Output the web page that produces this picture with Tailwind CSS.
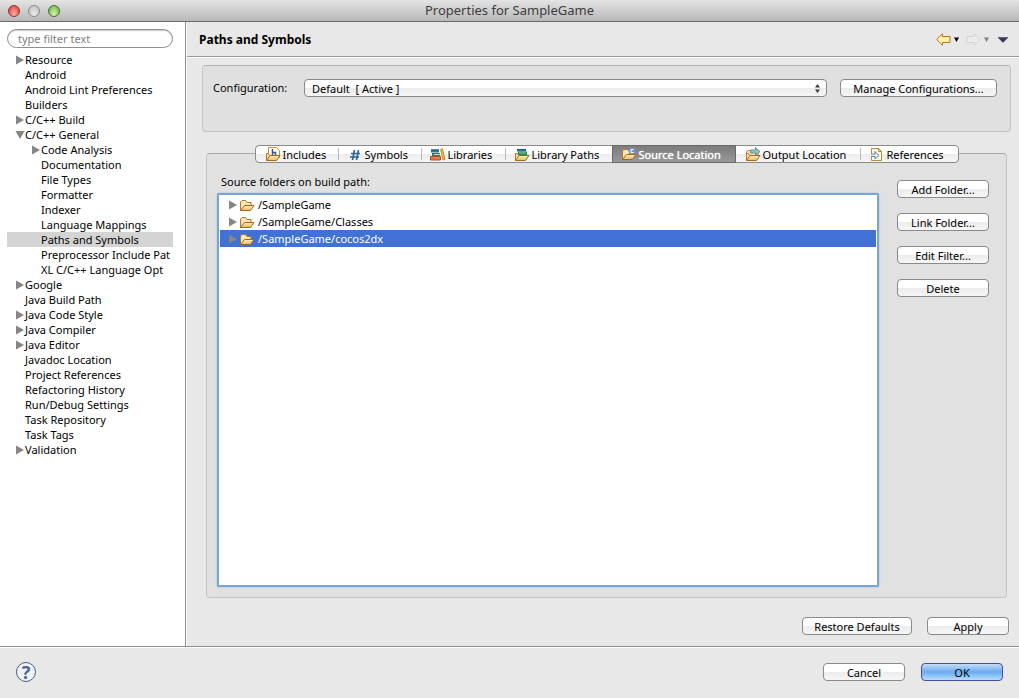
<!DOCTYPE html>
<html lang="en">
<head>
    <meta charset="UTF-8">
    <title>Properties for SampleGame</title>
    <script src="https://cdn.jsdelivr.net/npm/@tailwindcss/browser@4"></script>
</head>
<body class="h-screen flex flex-col overflow-hidden bg-[#e8e8e8] font-['Noto_Sans',sans-serif] text-[11px] leading-[15px] text-black">

    <!-- Shared icons -->
    <svg class="absolute size-0" aria-hidden="true">
        <defs>
            <linearGradient id="fold" x1="0" y1="0" x2="0" y2="1">
                <stop offset="0" stop-color="#fff0c0"/>
                <stop offset="1" stop-color="#f0b95c"/>
            </linearGradient>
        </defs>
        <symbol id="folder" viewBox="0 0 16 16">
            <path d="M1.500 13.500V5L3 3.500h3.500L8 5.500h4v3" fill="#fbe5b4" stroke="#b5772c"/>
            <path d="M1.500 13.500L5.500 8.500h9.500l-3.500 5z" fill="url(#fold)" stroke="#a8641c"/>
        </symbol>
        <symbol id="open-front" viewBox="0 0 16 16">
            <path d="M1.500 14.500V7.500h2l1 2" fill="#fbe5b4" stroke="#b5772c"/>
            <path d="M1.500 14.500L5 9.500h10l-3.500 5z" fill="url(#fold)" stroke="#a8641c"/>
        </symbol>
        <symbol id="right" viewBox="0 0 8 10"><path d="M0 0.500L8 5L0 9.500z" fill="#868686"/></symbol>
        <symbol id="down" viewBox="0 0 10 8"><path d="M0.500 0h9L5 8z" fill="#868686"/></symbol>
    </svg>

    <!-- Title bar -->
    <header class="relative h-[22px] shrink-0 flex items-center justify-center border-b border-[#6a6a6a] bg-linear-to-b from-[#e4e4e4] to-[#b8b8b8]">
        <div class="absolute left-2 flex gap-2">
            <button aria-label="Close" class="size-3 rounded-full border border-[#8f3431] bg-radial-[at_50%_85%] from-[#ffb0a8] to-[#d8332f]"></button>
            <button aria-label="Minimize" class="size-3 rounded-full border border-[#8b8b8b] bg-radial-[at_50%_85%] from-[#eeeeee] to-[#b9b9b9]"></button>
            <button aria-label="Zoom" class="size-3 rounded-full border border-[#47702f] bg-radial-[at_50%_85%] from-[#d5f7a8] to-[#62ae42]"></button>
        </div>
        <h1 class="text-[13px] text-[#3c3c3c]">Properties for SampleGame</h1>
    </header>

    <div class="flex-1 min-h-0 flex">
        <!-- Page tree -->
        <nav class="w-[186px] shrink-0 bg-white border-r border-[#8e8e8e] pl-[7px] pr-3 pt-[7px]">
            <input type="text" aria-label="Filter" placeholder="type filter text" class="block w-full h-[19px] rounded-full border border-[#8f8f8f] px-[10px] shadow-[inset_0_1px_1px_#c8c8c8] placeholder:text-[#808080] outline-none">
            <ul class="mt-1 whitespace-nowrap">
                <li class="flex items-center pl-[9px]"><svg class="w-2 h-[10px] mr-px"><use href="#right"/></svg>Resource</li>
                <li class="pl-[18px]">Android</li>
                <li class="pl-[18px]">Android Lint Preferences</li>
                <li class="pl-[18px]">Builders</li>
                <li class="flex items-center pl-[9px]"><svg class="w-2 h-[10px] mr-px"><use href="#right"/></svg>C/C++ Build</li>
                <li class="flex items-center pl-2"><svg class="w-[10px] h-2"><use href="#down"/></svg>C/C++ General</li>
                <li class="flex items-center pl-[25px]"><svg class="w-2 h-[10px] mr-px"><use href="#right"/></svg>Code Analysis</li>
                <li class="pl-[34px]">Documentation</li>
                <li class="pl-[34px]">File Types</li>
                <li class="pl-[34px]">Formatter</li>
                <li class="pl-[34px]">Indexer</li>
                <li class="pl-[34px]">Language Mappings</li>
                <li class="pl-[34px] bg-[#d4d4d4]">Paths and Symbols</li>
                <li class="pl-[34px]">Preprocessor Include Pat</li>
                <li class="pl-[34px]">XL C/C++ Language Opt</li>
                <li class="flex items-center pl-[9px]"><svg class="w-2 h-[10px] mr-px"><use href="#right"/></svg>Google</li>
                <li class="pl-[18px]">Java Build Path</li>
                <li class="flex items-center pl-[9px]"><svg class="w-2 h-[10px] mr-px"><use href="#right"/></svg>Java Code Style</li>
                <li class="flex items-center pl-[9px]"><svg class="w-2 h-[10px] mr-px"><use href="#right"/></svg>Java Compiler</li>
                <li class="flex items-center pl-[9px]"><svg class="w-2 h-[10px] mr-px"><use href="#right"/></svg>Java Editor</li>
                <li class="pl-[18px]">Javadoc Location</li>
                <li class="pl-[18px]">Project References</li>
                <li class="pl-[18px]">Refactoring History</li>
                <li class="pl-[18px]">Run/Debug Settings</li>
                <li class="pl-[18px]">Task Repository</li>
                <li class="pl-[18px]">Task Tags</li>
                <li class="flex items-center pl-[9px]"><svg class="w-2 h-[10px] mr-px"><use href="#right"/></svg>Validation</li>
            </ul>
        </nav>

        <main class="flex-1 min-w-0 flex flex-col border-l border-white">
            <div class="h-[35px] shrink-0 flex items-center justify-between pl-3 pr-[11px] border-b border-[#999999]">
                <h2 class="text-[12px] font-bold">Paths and Symbols</h2>
                <div class="flex items-center pt-px">
                    <button aria-label="Back" class="flex items-center gap-[3px]">
                        <svg class="w-[15px] h-[13px]" viewBox="0 0 15 13"><path d="M0.700 6.500L6.500 0.800V3.500h7.500v6H6.500v2.700z" fill="#fdf0b0" stroke="#b9770e"/></svg>
                        <svg class="w-[5px] h-[5px]" viewBox="0 0 5 5"><path d="M0 0.500h5L2.500 5z"/></svg>
                    </button>
                    <button aria-label="Forward" disabled class="flex items-center gap-[3px] ml-[7px]">
                        <svg class="w-[15px] h-[13px]" viewBox="0 0 15 13"><path d="M14.300 6.500L8.500 0.800V3.500H1v6h7.500v2.700z" fill="#ececec" stroke="#d2d2d2"/></svg>
                        <svg class="w-[5px] h-[5px]" viewBox="0 0 5 5"><path d="M0 0.500h5L2.500 5z" fill="#808080"/></svg>
                    </button>
                    <button aria-label="Menu" class="ml-[9px]">
                        <svg class="block w-[10px] h-[6px]" viewBox="0 0 10 6"><path d="M0 0.500h10L5 5.500z" fill="#39345f" stroke="#2f2a6b" stroke-width=".5"/></svg>
                    </button>
                </div>
            </div>

            <div class="flex-1 min-h-0 flex flex-col border-t border-white pt-[7px] pl-[15px] pr-2">
                <!-- Configuration -->
                <section class="h-[67px] shrink-0 flex items-start gap-[13px] rounded border border-[#c4c4c4] border-t-[#b4b4b4] bg-[#e0e0e0] pt-[13px] pl-[10px] pr-[13px]">
                    <label for="config" class="w-[78px] leading-[18px]">Configuration:</label>
                    <div class="relative flex-1">
                        <select id="config" class="block w-full h-[18px] appearance-none rounded border border-[#8a8a8a] bg-linear-to-b from-white from-50% via-[#ececec] via-50% to-[#f6f6f6] pl-[7px] leading-[15px]">
                            <option>Default&nbsp; [ Active ]</option>
                        </select>
                        <svg class="absolute right-[7px] top-[5px] w-[5px] h-[9px] pointer-events-none" viewBox="0 0 5 9"><path d="M0 3.500L2.500 0L5 3.500zM0 5.500h5L2.500 9z" fill="#3c3c3c"/></svg>
                    </div>
                    <button class="w-[157px] h-[18px] rounded border border-[#8a8a8a] bg-linear-to-b from-white from-50% via-[#ececec] via-50% to-[#f6f6f6]">Manage Configurations...</button>
                </section>

                <!-- Tabs sit on the top edge of the panel -->
                <div role="tablist" class="z-10 mt-[13px] -mb-[10px] mx-auto h-[18px] shrink-0 grid grid-cols-[82px_83px_84px_107px_124px_124px_98px] rounded border border-[#8a8a8a] bg-linear-to-b from-white from-50% via-[#ececec] via-50% to-[#f6f6f6] whitespace-nowrap">
                    <button role="tab" class="h-4 flex items-center gap-[2px] pl-[9px]">
                        <svg class="size-4 shrink-0" viewBox="0 0 16 16">
                            <path d="M3.500 12V1.500h8l3 3V12" fill="#fffdf0" stroke="#c1923c"/>
                            <path d="M7.500 3v6M7.500 6.500h3V9" fill="none" stroke="#31588c" stroke-width="1.500"/>
                            <use href="#open-front"/>
                        </svg>
                        Includes
                    </button>
                    <button role="tab" class="relative h-4 flex items-center gap-[2px] pl-[9px]">
                        <span class="absolute left-0 top-[2px] h-3 w-px bg-[#b8b8b8]"></span>
                        <svg class="size-4 shrink-0" viewBox="0 0 16 16"><path d="M7.500 4L5.500 14M11.500 4L9.500 14M4 7.500h9M3 11h9" fill="none" stroke="#2f6298" stroke-width="1.600"/></svg>
                        Symbols
                    </button>
                    <button role="tab" class="relative h-4 flex items-center gap-[2px] pl-[9px]">
                        <span class="absolute left-0 top-[2px] h-3 w-px bg-[#b8b8b8]"></span>
                        <svg class="size-4 shrink-0" viewBox="0 0 16 16">
                            <path d="M1 3.500h8v3H1z" fill="#2878a8"/><path d="M1 3.500h8v1H1z" fill="#185680"/>
                            <path d="M2 7h8v3H2z" fill="#258553"/><path d="M4 8h6v1H4z" fill="#b4dfbb"/>
                            <path d="M0.500 10.500h10v3.500h-10z" fill="#d98251" stroke="#a84e27"/>
                            <path d="M10.500 3.500l2-1l2.500 11l-2 0.500z" fill="#f4b536" stroke="#c98316" stroke-width=".8"/>
                        </svg>
                        Libraries
                    </button>
                    <button role="tab" class="relative h-4 flex items-center gap-[2px] pl-[9px]">
                        <span class="absolute left-0 top-[2px] h-3 w-px bg-[#b8b8b8]"></span>
                        <svg class="size-4 shrink-0" viewBox="0 0 16 16">
                            <path d="M3 3h9v2.500H3z" fill="#2878a8"/><path d="M3 3h9v1H3z" fill="#185680"/>
                            <path d="M4 5.500h9v4H4z" fill="#258553"/><path d="M5 6.500h7v1H5z" fill="#8fcf9f"/>
                            <use href="#open-front"/>
                        </svg>
                        Library Paths
                    </button>
                    <button role="tab" aria-selected="true" class="-my-px h-[18px] flex items-center gap-[2px] pl-2 border border-[#6a6a6a] bg-linear-to-b from-[#7c7c7c] to-[#989898] text-white [text-shadow:0_0_1px_#ffffff]">
                        <svg class="size-4 shrink-0" viewBox="0 0 16 16">
                            <use href="#folder"/>
                            <path d="M8 2h6v6H8z" fill="#6e93d6"/>
                            <path d="M12.500 3.500h-2.500v3h2.500" fill="none" stroke="#ffffff"/>
                        </svg>
                        Source Location
                    </button>
                    <button role="tab" class="h-4 flex items-center gap-[2px] pl-[9px]">
                        <svg class="size-4 shrink-0" viewBox="0 0 16 16">
                            <path d="M1.500 14.500V6l1.500-1.500h3l1 1.500h6v4" fill="#fbe5b4" stroke="#b5772c"/>
                            <use href="#open-front"/>
                            <path d="M5.500 4h5v-2.500l4.500 4l-4.500 4v-2.500h-5z" fill="#8fc0c4" stroke="#4c8494" stroke-width=".8"/>
                        </svg>
                        Output Location
                    </button>
                    <button role="tab" class="relative h-4 flex items-center gap-[2px] pl-[9px]">
                        <span class="absolute left-0 top-[2px] h-3 w-px bg-[#b8b8b8]"></span>
                        <svg class="size-4 shrink-0" viewBox="0 0 16 16">
                            <path d="M2.500 2.500h7l3 3v9h-10z" fill="#fdf9e6" stroke="#b18a3a"/>
                            <path d="M9.500 2.500v3h3" fill="none" stroke="#b18a3a"/>
                            <path d="M2 8h4v-2.500L10 9.500L6 13v-2.500H2" fill="#e4ecf8" stroke="#637fae"/>
                        </svg>
                        References
                    </button>
                </div>

                <section role="tabpanel" class="flex-1 min-h-0 mx-1 flex gap-[18px] rounded border border-[#c4c4c4] border-t-[#a8a8a8] bg-[#e1e1e1] pt-5 pb-[10px] pl-[10px] pr-[17px]">
                    <div class="flex-1 min-w-0 flex flex-col">
                        <h3 id="folders-label" class="pl-1">Source folders on build path:</h3>
                        <ul aria-labelledby="folders-label" class="mt-1 flex-1 p-px bg-white border-2 border-[#78a5d2] rounded-xs shadow-[0_0_2px_#8ab4e0]">
                            <li class="h-[17px] flex items-center pl-[9px]"><svg class="w-2 h-[10px] mr-[2px]"><use href="#right"/></svg><svg class="size-4 mr-[3px]"><use href="#folder"/></svg>/SampleGame</li>
                            <li class="h-[17px] flex items-center pl-[9px]"><svg class="w-2 h-[10px] mr-[2px]"><use href="#right"/></svg><svg class="size-4 mr-[3px]"><use href="#folder"/></svg>/SampleGame/Classes</li>
                            <li class="h-[17px] flex items-center pl-[9px] bg-[#4072d6] text-white"><svg class="w-2 h-[10px] mr-[2px]"><use href="#right"/></svg><svg class="size-4 mr-[3px]"><use href="#folder"/></svg>/SampleGame/cocos2dx</li>
                        </ul>
                    </div>
                    <div class="w-[92px] flex flex-col gap-[15px] pt-[6px]">
                        <button class="h-[18px] rounded border border-[#8a8a8a] bg-linear-to-b from-white from-50% via-[#ececec] via-50% to-[#f6f6f6]">Add Folder...</button>
                        <button class="h-[18px] rounded border border-[#8a8a8a] bg-linear-to-b from-white from-50% via-[#ececec] via-50% to-[#f6f6f6]">Link Folder...</button>
                        <button class="h-[18px] rounded border border-[#8a8a8a] bg-linear-to-b from-white from-50% via-[#ececec] via-50% to-[#f6f6f6]">Edit Filter...</button>
                        <button class="h-[18px] rounded border border-[#8a8a8a] bg-linear-to-b from-white from-50% via-[#ececec] via-50% to-[#f6f6f6]">Delete</button>
                    </div>
                </section>

                <div class="flex justify-end gap-[15px] pt-[19px] pb-[11px] pr-[2px]">
                    <button class="w-[110px] h-[18px] rounded border border-[#8a8a8a] bg-linear-to-b from-white from-50% via-[#ececec] via-50% to-[#f6f6f6]">Restore Defaults</button>
                    <button class="w-[82px] h-[18px] rounded border border-[#8a8a8a] bg-linear-to-b from-white from-50% via-[#ececec] via-50% to-[#f6f6f6]">Apply</button>
                </div>
            </div>
        </main>
    </div>

    <!-- Dialog buttons -->
    <footer class="h-[52px] shrink-0 flex items-center justify-between border-t border-[#8e8e8e] shadow-[inset_0_1px_0_#ffffff] px-4 pb-px">
        <button aria-label="Help" class="size-5 rounded-full border border-[#4a5f88] bg-[#f0f1f4] text-[18px] leading-[18px] font-bold text-[#4f6690]">?</button>
        <div class="flex gap-4">
            <button class="w-[82px] h-[18px] rounded border border-[#8a8a8a] bg-linear-to-b from-white from-50% via-[#ececec] via-50% to-[#f6f6f6]">Cancel</button>
            <button class="w-[82px] h-[18px] rounded border border-[#4c4c98] bg-linear-to-b from-[#c4dcf6] from-0% via-[#6aaaf0] via-50% to-[#b2e0fc]">OK</button>
        </div>
    </footer>
</body>
</html>
